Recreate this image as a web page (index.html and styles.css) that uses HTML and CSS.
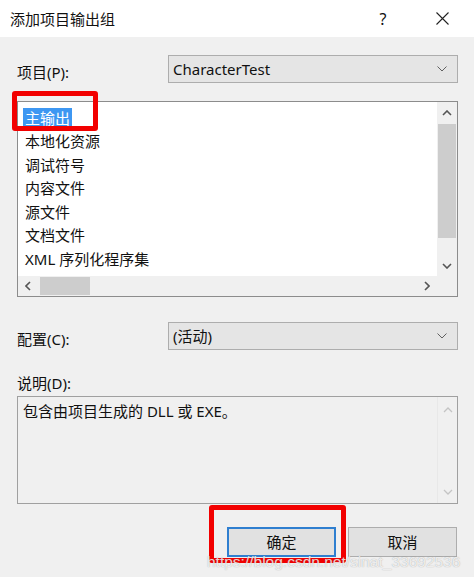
FILE: index.html
```html
<!DOCTYPE html>
<html lang="zh">
<head>
<meta charset="utf-8">
<title>添加项目输出组</title>
<link rel="stylesheet" href="styles.css">
</head>
<body>
<div class="dialog">
  <div class="titlebar">
    <span class="title">添加项目输出组</span>
    <span class="help">?</span>
    <span class="close"><svg width="13" height="13" viewBox="0 0 13 13"><path d="M0.5 0.5 L12.5 12.5 M12.5 0.5 L0.5 12.5" stroke="#222" stroke-width="1.1" fill="none"/></svg></span>
  </div>
  <div class="content">
    <div class="row">
      <span class="label">项目(P):</span>
      <div class="combo"><span class="combo-text">CharacterTest</span><svg class="combo-arrow" width="10" height="6" viewBox="0 0 10 6"><path d="M0.5 0.5 L5 5 L9.5 0.5" stroke="#606060" stroke-width="1" fill="none"/></svg></div>
    </div>

    <div class="listbox">
      <div class="items">
        <div class="item"><span class="txt sel">主输出</span></div>
        <div class="item"><span class="txt">本地化资源</span></div>
        <div class="item"><span class="txt">调试符号</span></div>
        <div class="item"><span class="txt">内容文件</span></div>
        <div class="item"><span class="txt">源文件</span></div>
        <div class="item"><span class="txt">文档文件</span></div>
        <div class="item"><span class="txt">XML 序列化程序集</span></div>
      </div>
      <div class="vscroll">
        <div class="sbtn"><svg width="10" height="6" viewBox="0 0 10 6"><path d="M1 5 L5 1 L9 5" stroke="#555" stroke-width="1.6" fill="none"/></svg></div>
        <div class="vthumb"></div>
        <div class="spacer"></div>
        <div class="sbtn"><svg width="10" height="6" viewBox="0 0 10 6"><path d="M1 1 L5 5 L9 1" stroke="#555" stroke-width="1.6" fill="none"/></svg></div>
      </div>
      <div class="hscroll">
        <div class="hbtn"><svg width="6" height="10" viewBox="0 0 6 10"><path d="M5 1 L1 5 L5 9" stroke="#555" stroke-width="1.6" fill="none"/></svg></div>
        <div class="hthumb"></div>
        <div class="spacer"></div>
        <div class="hbtn"><svg width="6" height="10" viewBox="0 0 6 10"><path d="M1 1 L5 5 L1 9" stroke="#555" stroke-width="1.6" fill="none"/></svg></div>
      </div>
      <div class="corner"></div>
    </div>

    <div class="row row-config">
      <span class="label">配置(C):</span>
      <div class="combo"><span class="combo-text">(活动)</span><svg class="combo-arrow" width="10" height="6" viewBox="0 0 10 6"><path d="M0.5 0.5 L5 5 L9.5 0.5" stroke="#606060" stroke-width="1" fill="none"/></svg></div>
    </div>

    <div class="desc-label">说明(D):</div>
    <div class="descbox">
      <div class="desc-text">包含由项目生成的 DLL 或 EXE。</div>
      <div class="desc-scroll">
        <svg width="10" height="6" viewBox="0 0 10 6"><path d="M1 5 L5 1 L9 5" stroke="#c4c4c4" stroke-width="1.3" fill="none"/></svg>
        <svg width="10" height="6" viewBox="0 0 10 6"><path d="M1 1 L5 5 L9 1" stroke="#c4c4c4" stroke-width="1.3" fill="none"/></svg>
      </div>
    </div>

    <div class="buttons">
      <button class="btn btn-default">确定</button>
      <button class="btn">取消</button>
    </div>
  </div>

  <div class="mark mark-item"></div>
  <div class="mark mark-ok"></div>
  <div class="watermark">https://blog.csdn.net/sinat_33692536</div>
</div>
</body>
</html>
```

FILE: styles.css
```css
* { box-sizing: border-box; }

html, body {
  margin: 0;
  padding: 0;
  background: #f0f0f0;
}

body {
  font-family: "Noto Sans", "Noto Sans CJK SC", sans-serif;
  font-size: 15px;
  color: #111;
}

.dialog {
  position: relative;
  width: 474px;
  height: 577px;
  background: #f0f0f0;
  overflow: hidden;
}

.titlebar {
  height: 37px;
  background: #fff;
  display: flex;
  align-items: center;
  padding-left: 10px;
}

.title {
  flex: 1;
  line-height: 20px;
  font-size: 15px;
}

.help {
  width: 14px;
  text-align: center;
  font-size: 16px;
  line-height: 20px;
  margin-right: 46px;
}

.close {
  display: flex;
  margin-right: 25px;
}

.content {
  padding: 0 16px 0 17px;
}

.row {
  display: flex;
  align-items: flex-start;
  margin-top: 18px;
  height: 28px;
}

.row-config {
  margin-top: 25px;
}

.label {
  width: 151px;
  padding-top: 7px;
  line-height: 20px;
}

.combo {
  flex: 1;
  height: 28px;
  background: #e5e5e5;
  border: 1px solid #adadad;
  display: flex;
  align-items: center;
  padding: 0 10px 0 4px;
}

.combo-text {
  flex: 1;
  line-height: 20px;
}

.listbox {
  margin-top: 18px;
  height: 196px;
  border: 1px solid #8c8c8c;
  background: #fff;
  display: grid;
  grid-template-columns: 1fr 20px;
  grid-template-rows: 1fr 20px;
}

.items {
  padding-top: 4px;
  padding-left: 5px;
}

.item {
  height: 23.5px;
  display: flex;
  align-items: center;
}

.txt {
  padding: 0 2px;
  line-height: 20px;
}

.sel {
  background: #3d97f2;
  color: #fff;
}

.vscroll {
  background: #f0f0f0;
  display: flex;
  flex-direction: column;
}

.sbtn {
  height: 21px;
  display: flex;
  align-items: center;
  justify-content: center;
}

.vthumb {
  height: 114px;
  margin: 1px 1px 0 1px;
  background: #cdcdcd;
}

.spacer {
  flex: 1;
}

.hscroll {
  background: #f0f0f0;
  display: flex;
  align-items: stretch;
}

.hbtn {
  width: 20px;
  display: flex;
  align-items: center;
  justify-content: center;
}

.hthumb {
  width: 50px;
  margin: 1px 0 1px 2px;
  background: #cdcdcd;
}

.corner {
  background: #f0f0f0;
}

.desc-label {
  margin-top: 23px;
  line-height: 20px;
}

.descbox {
  margin-top: 3px;
  height: 108px;
  border: 1px solid #a0a0a0;
  background: #f0f0f0;
  display: flex;
}

.desc-text {
  flex: 1;
  padding: 4px 5px;
  line-height: 20px;
}

.desc-scroll {
  width: 20px;
  border-left: 1px solid #e8e8e8;
  display: flex;
  flex-direction: column;
  align-items: center;
  justify-content: space-between;
  padding: 10px 0 8px;
}

.buttons {
  margin-top: 23px;
  display: flex;
  justify-content: flex-end;
  gap: 12px;
  padding-right: 1px;
}

.btn {
  width: 109px;
  height: 30px;
  background: #e1e1e1;
  border: 1px solid #adadad;
  font-family: "Noto Sans", "Noto Sans CJK SC", sans-serif;
  font-size: 15px;
  color: #111;
  padding: 0;
  line-height: 16px;
}

.btn-default {
  border: 2px solid #2f7fd0;
}

.mark {
  position: absolute;
  border: 5px solid #f20000;
  border-radius: 3px;
}

.mark-item {
  left: 12px;
  top: 91px;
  width: 86px;
  height: 40px;
}

.mark-ok {
  left: 209px;
  top: 505px;
  width: 137px;
  height: 58px;
}

.watermark {
  position: absolute;
  left: 207px;
  top: 555px;
  font-family: "Liberation Sans", Arial, sans-serif;
  font-size: 15.5px;
  line-height: 13px;
  color: rgba(255, 255, 255, 0.8);
  text-shadow: 0 0 1px rgba(90, 90, 90, 0.55);
  white-space: nowrap;
}
```
